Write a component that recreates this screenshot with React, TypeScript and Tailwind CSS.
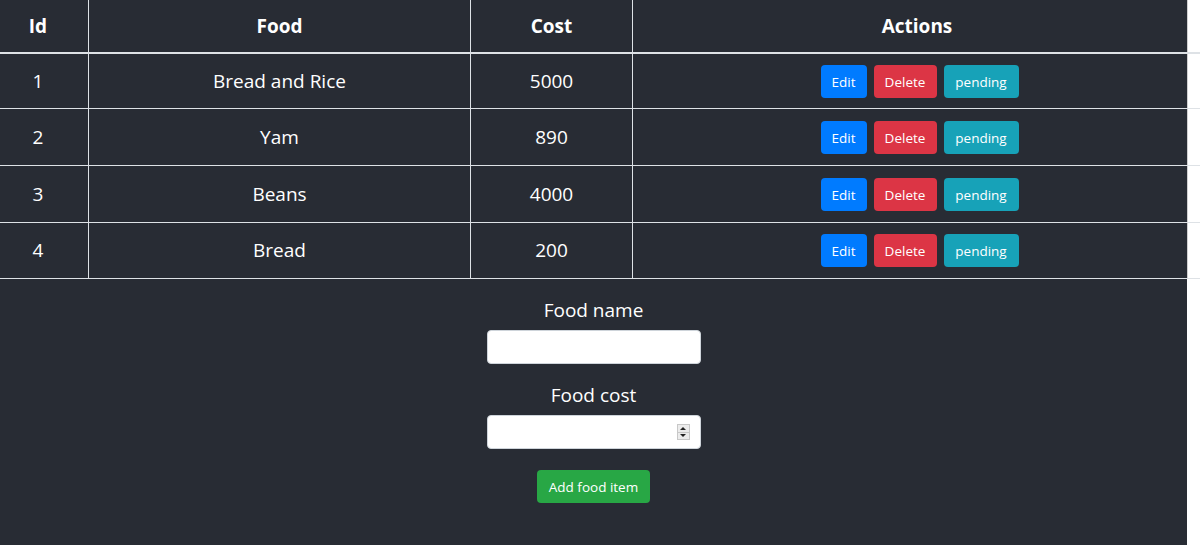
import React from "react";

const rows = [
  { id: 1, food: "Bread and Rice", cost: 5000, h: "h-[55px]" },
  { id: 2, food: "Yam", cost: 890, h: "h-[57px]" },
  { id: 3, food: "Beans", cost: 4000, h: "h-[57px]" },
  { id: 4, food: "Bread", cost: 200, h: "h-[56px]" },
];

function Spinner() {
  return (
    <div className="absolute right-[11px] top-[9px] w-[13px] h-[16px] bg-[#ececec] border border-[#c8c8c8] flex flex-col">
      <div className="flex-1 flex items-center justify-center border-b border-[#c8c8c8]">
        <div className="w-0 h-0 border-l-[3px] border-r-[3px] border-b-[3px] border-l-transparent border-r-transparent border-b-[#222]" />
      </div>
      <div className="flex-1 flex items-center justify-center">
        <div className="w-0 h-0 border-l-[3px] border-r-[3px] border-t-[3px] border-l-transparent border-r-transparent border-t-[#222]" />
      </div>
    </div>
  );
}

export default function App() {
  return (
    <div
      className="w-[1200px] h-[545px] bg-white overflow-hidden text-white"
      style={{ fontFamily: '"Open Sans", "Noto Sans", sans-serif' }}
    >
      <div className="w-[1187px] h-[545px] bg-[#282c34]">
        <div className="w-[1200px] flex flex-col">
          <div className="flex h-[54px] border-b-2 border-[#dee2e6] text-[19px] font-bold">
            <div className="w-[89px] border-r border-[#dee2e6] flex items-center justify-center pr-[12px] pt-[1px]">Id</div>
            <div className="w-[382px] border-r border-[#dee2e6] flex items-center justify-center pt-[1px]">Food</div>
            <div className="w-[162px] border-r border-[#dee2e6] flex items-center justify-center pt-[1px]">Cost</div>
            <div className="w-[555px] border-r border-[#d0d0d0] flex items-center justify-center pl-[14px] pt-[1px]">Actions</div>
            <div className="flex-1" />
          </div>
          {rows.map((r) => (
            <div key={r.id} className={`flex ${r.h} border-b border-[#dee2e6] text-[19px]`}>
              <div className="w-[89px] border-r border-[#dee2e6] flex items-center justify-center pr-[12px]">{r.id}</div>
              <div className="w-[382px] border-r border-[#dee2e6] flex items-center justify-center">{r.food}</div>
              <div className="w-[162px] border-r border-[#dee2e6] flex items-center justify-center">{r.cost}</div>
              <div className="w-[555px] border-r border-[#d0d0d0] flex items-center justify-center gap-[7px] pl-[19px] text-[13.5px]">
                <button className="h-[33px] w-[46px] pt-[2px] rounded-[4px] bg-[#007bff] text-white">Edit</button>
                <button className="h-[33px] w-[63px] pt-[2px] rounded-[4px] bg-[#dc3545] text-white">Delete</button>
                <button className="h-[33px] w-[75px] pt-[2px] rounded-[4px] bg-[#17a2b8] text-white">pending</button>
              </div>
              <div className="flex-1" />
            </div>
          ))}
        </div>
        <div className="flex flex-col items-center pt-[16px]">
          <label className="text-[19px] leading-[30px]">Food name</label>
          <input type="text" className="mt-[5px] w-[214px] h-[34px] rounded-[4px] bg-white border border-[#ced4da] outline-none" />
          <label className="text-[19px] leading-[30px] mt-[16px]">Food cost</label>
          <div className="relative mt-[5px]">
            <input type="text" className="w-[214px] h-[34px] rounded-[4px] bg-white border border-[#ced4da] outline-none" />
            <Spinner />
          </div>
          <button className="mt-[21px] h-[33px] w-[113px] pt-[1px] rounded-[4px] bg-[#28a745] text-white text-[13.5px]">Add food item</button>
        </div>
      </div>
    </div>
  );
}
